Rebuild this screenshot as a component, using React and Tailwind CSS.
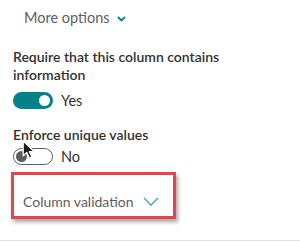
import React from 'react';

const Toggle = ({ on }) => (
  <div
    className={
      on
        ? 'w-[40px] h-[17px] rounded-full bg-[#038387] flex items-center justify-end px-[3px]'
        : 'w-[40px] h-[17px] rounded-full bg-white border border-[#605e5c] flex items-center justify-start px-[2px]'
    }
  >
    <div className={on ? 'w-[11px] h-[11px] rounded-full bg-white' : 'w-[11px] h-[11px] rounded-full bg-[#605e5c]'} />
  </div>
);

const Cursor = () => (
  <svg className="absolute left-[9px] top-[-8px]" width="15" height="21" viewBox="0 0 14 20">
    <path d="M1 1 L1 15 L4.5 11.8 L7 17.5 L9.3 16.5 L6.9 11 L11.5 11 Z" fill="#1b1b1b" stroke="#ffffff" strokeWidth="1.2" strokeLinejoin="round" />
  </svg>
);

export default function App() {
  return (
    <div className="w-[300px] h-[243px] bg-white overflow-hidden font-['Lato',sans-serif] text-[#323130] flex flex-col">
      {/* More options */}
      <div className="h-[34px] pl-[24px] pt-[8px] flex items-start gap-[7px]">
        <span className="text-[14.5px] leading-[20px] text-[#605e5c]">More options</span>
        <svg className="mt-[8px]" width="9" height="6" viewBox="0 0 9 6">
          <path d="M1 1 L4.5 4.5 L8 1" fill="none" stroke="#038387" strokeWidth="1.8" />
        </svg>
      </div>

      <div className="pl-[13px] flex flex-col">
        <div className="text-[14px] leading-[18px] font-semibold mt-[14px]">
          Require that this column contains<br />information
        </div>
        <div className="flex items-center gap-[8px] mt-[8px]">
          <Toggle on />
          <span className="text-[14.5px] text-[#323130] leading-[17px]">Yes</span>
        </div>

        <div className="text-[14px] leading-[18px] font-semibold mt-[17px]">Enforce unique values</div>
        <div className="flex items-center gap-[8px] mt-[4px] relative">
          <Toggle />
          <span className="text-[14.5px] text-[#323130] leading-[17px]">No</span>
          <Cursor />
        </div>
      </div>

      {/* Column validation highlighted */}
      <div className="ml-[11px] mt-[7px] w-[165px] h-[47px] border-[3px] border-[#e8434b] shadow-[2px_3px_4px_rgba(0,0,0,0.35)] flex items-center pl-[9px] pt-[12px] gap-[9px]">
        <span className="text-[14px] leading-[20px] text-[#605e5c]">Column validation</span>
        <svg width="16" height="9" viewBox="0 0 16 9">
          <path d="M1 1 L8 8 L15 1" fill="none" stroke="#4a9e9c" strokeWidth="1.3" />
        </svg>
      </div>

      <div className="mt-[21px] border-t border-[#e1dfdd]" />
    </div>
  );
}
